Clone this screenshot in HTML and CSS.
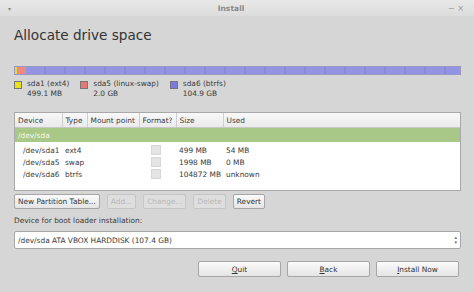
FILE: index.html
```html
<!doctype html>
<html lang="en">
<head>
<meta charset="utf-8">
<title>Install</title>
<link rel="stylesheet" href="styles.css">
</head>
<body>

<div class="window">
  <div class="titlebar">
    <span class="menu">&#9662;</span>
    <span class="title">Install</span>
    <span class="controls">&minus; &times;</span>
  </div>

  <div class="content">
    <h1>Allocate drive space</h1>

    <div class="bar">
      <span class="seg yellow" style="width:0.5%"></span>
      <span class="seg red" style="width:1.9%"></span>
      <span class="seg blue" style="flex:1"></span>
    </div>

    <div class="legend">
      <div class="item">
        <span class="swatch yellow"></span>
        <div>sda1 (ext4)<br>499.1 MB</div>
      </div>
      <div class="item">
        <span class="swatch red"></span>
        <div>sda5 (linux-swap)<br>2.0 GB</div>
      </div>
      <div class="item">
        <span class="swatch blue"></span>
        <div>sda6 (btrfs)<br>104.9 GB</div>
      </div>
    </div>

    <div class="tablebox">
      <table>
        <colgroup>
          <col style="width:47px">
          <col style="width:25px">
          <col style="width:52px">
          <col style="width:37px">
          <col style="width:47px">
          <col>
        </colgroup>
        <tr class="head">
          <th>Device</th>
          <th>Type</th>
          <th>Mount point</th>
          <th>Format?</th>
          <th>Size</th>
          <th class="last">Used</th>
        </tr>
        <tr class="sel"><td colspan="6">/dev/sda</td></tr>
        <tr class="first">
          <td class="indent">/dev/sda1</td><td>ext4</td><td></td>
          <td><span class="check"></span></td><td>499 MB</td><td>54 MB</td>
        </tr>
        <tr>
          <td class="indent">/dev/sda5</td><td>swap</td><td></td>
          <td><span class="check"></span></td><td>1998 MB</td><td>0 MB</td>
        </tr>
        <tr>
          <td class="indent">/dev/sda6</td><td>btrfs</td><td></td>
          <td><span class="check"></span></td><td>104872 MB</td><td>unknown</td>
        </tr>
      </table>
    </div>

    <div class="tools">
      <button>New Partition Table...</button>
      <button disabled>Add...</button>
      <button disabled>Change...</button>
      <button disabled>Delete</button>
      <button>Revert</button>
    </div>

    <p class="label">Device for boot loader installation:</p>
    <div class="combo">
      <span>/dev/sda ATA VBOX HARDDISK (107.4 GB)</span>
      <span class="arrows">&#9652;<br>&#9662;</span>
    </div>

    <div class="actions">
      <button class="wide"><u>Q</u>uit</button>
      <button class="wide"><u>B</u>ack</button>
      <button class="wide"><u>I</u>nstall Now</button>
    </div>
  </div>
</div>

</body>
</html>
```

FILE: styles.css
```css
body {
  margin: 0;
  font-family: "DejaVu Sans", sans-serif;
  font-size: 7.4px;
  color: #3a3a3a;
  background: #d6d6d6;
}
.window {
  width: 474px;
  height: 292px;
  background: #d6d6d6;
}
.titlebar {
  height: 16px;
  display: flex;
  align-items: center;
  justify-content: space-between;
  padding: 0 6px 0 8px;
  background: linear-gradient(#e8e8e8, #dcdcdc);
  color: #8a8a8a;
}
.titlebar .title {
  font-weight: bold;
  font-size: 7.6px;
  margin-right: 14px;
}
.titlebar .menu {
  font-size: 6px;
  width: 20px;
}
.titlebar .controls {
  width: 20px;
  font-size: 8px;
  color: #999;
}
.content {
  padding: 0 13px 0 14px;
}
h1 {
  margin: 10px 0 0;
  height: 18px;
  line-height: 18px;
  font-size: 13.6px;
  font-weight: normal;
  color: #333;
}
.bar {
  display: flex;
  height: 7px;
  margin-top: 22px;
  border: 1px solid #9898c0;
}
.seg.yellow { background: #e0d840; }
.seg.red { background: #ec8a84; }
.seg.blue {
  background: repeating-linear-gradient(90deg, #9494e4 0 18px, #8a8ad8 18px 20px);
}
.legend {
  display: flex;
  gap: 11px;
  margin-top: 4px;
  line-height: 10px;
}
.legend .item {
  display: flex;
  gap: 5px;
}
.swatch {
  width: 6px;
  height: 6px;
  margin-top: 2px;
  border: 1px solid #777;
}
.swatch.yellow { background: #e8e020; }
.swatch.red { background: #e87878; }
.swatch.blue { background: #7a7ae0; }
.tablebox {
  margin-top: 13px;
  height: 77px;
  background: #fff;
  border: 1px solid #a8a8a8;
}
table {
  width: 100%;
  table-layout: fixed;
  border-collapse: collapse;
}
th {
  font-weight: normal;
  text-align: left;
  height: 14px;
  padding: 0 3px;
  white-space: nowrap;
  background: linear-gradient(#f8f8f8, #eaeaea);
  border-right: 1px solid #cfcfcf;
  border-bottom: 1px solid #c8c8c8;
}
th.last { border-right: none; }
tr.sel td {
  background: #a8c888;
  color: #f4f8ee;
  height: 14px;
  padding: 0 3px;
}
td {
  height: 12px;
  padding: 0 3px;
  white-space: nowrap;
}
tr.first td { padding-top: 2px; }
td.indent { padding-left: 8px; }
.check {
  display: block;
  width: 8px;
  height: 8px;
  margin-left: 9px;
  background: #e4e4e4;
  border: 1px solid #d6d6d6;
}
.tools {
  display: flex;
  gap: 7px;
  margin-top: 3px;
}
button {
  font-family: inherit;
  font-size: 7.4px;
  color: #333;
  height: 15px;
  padding: 0 3px;
  background: linear-gradient(#fbfbfb, #e4e4e4);
  border: 1px solid #a6a6a6;
  border-radius: 2px;
}
button:disabled {
  color: #b8b8b8;
  border-color: #c6c6c6;
  background: #dedede;
}
.label {
  margin: 6px 0 0;
  line-height: 12px;
}
.combo {
  display: flex;
  justify-content: space-between;
  align-items: center;
  height: 16px;
  margin-top: 4px;
  padding: 0 3px;
  background: #fff;
  border: 1px solid #a8a8a8;
  border-radius: 2px;
}
.combo .arrows {
  font-size: 5px;
  line-height: 5px;
  color: #666;
}
.actions {
  display: flex;
  justify-content: flex-end;
  gap: 6px;
  margin-top: 12px;
  padding-right: 2px;
}
button.wide {
  width: 83px;
  height: 16px;
}
```
